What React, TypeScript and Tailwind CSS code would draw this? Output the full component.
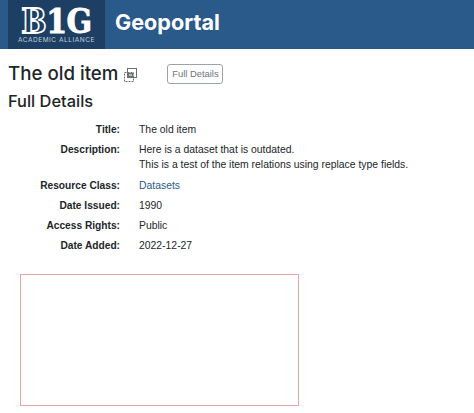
import type { ReactNode } from "react";

const Row = ({ label, children, gap = "mb-[5px]" }: { label: string; children: ReactNode; gap?: string }) => (
  <div className={`flex leading-[15px] ${gap}`}>
    <div className="w-[112px] text-right font-bold text-[10.2px] text-[#212529]">{label}</div>
    <div className="ml-[19px] text-[#212529]">{children}</div>
  </div>
);

export default function App() {
  return (
    <div className="w-[474px] h-[413px] overflow-hidden bg-white font-['Liberation_Sans',sans-serif] text-[10.4px]">
      <header className="h-[49px] bg-[#2a5a8a] flex items-stretch pl-2">
        <div className="w-[97px] bg-[#1c3f63] flex flex-col items-center">
          <div className="flex items-center h-[30px] mt-[5px] font-['DejaVu_Serif',serif] font-bold text-[30px] leading-[30px] text-white tracking-[-0.5px] scale-y-110 origin-top">
            <span className="text-[#1c3f63] [-webkit-text-stroke:1.6px_white]">B</span>
            <span className="[-webkit-text-stroke:0.8px_white]">1G</span>
          </div>
          <div className="font-['Inter',sans-serif] text-[6.5px] leading-[7px] tracking-[0.55px] text-[#c3d0dd] mt-[2px]">ACADEMIC ALLIANCE</div>
        </div>
        <div className="ml-[10px] font-['Inter',sans-serif] text-[21.6px] font-bold text-white leading-[44px]">Geoportal</div>
      </header>
      <main className="pl-2 pt-[12px]">
        <div className="flex items-center h-[26px]">
          <h1 className="font-['Inter',sans-serif] text-[18.7px] font-medium text-[#212529] leading-[26px]">The old item</h1>
          <svg className="ml-[5px] mt-[1px]" width="15" height="16" viewBox="0 0 15 16" fill="none" stroke="#6b6f73" strokeWidth="1">
            <rect x="4.5" y="1.5" width="9" height="9" />
            <rect x="1.5" y="5.5" width="9" height="9" strokeDasharray="2 1" />
            <rect x="5.5" y="6.5" width="4" height="3" fill="#b8bcc0" />
          </svg>
          <button className="ml-[29px] h-[20px] w-[56px] border border-[#9ca3a8] rounded-[3px] text-[9.4px] text-[#6c757d] bg-white">Full Details</button>
        </div>
        <h2 className="font-['Inter',sans-serif] text-[16.4px] font-medium text-[#212529] leading-[22px] mt-[3px]">Full Details</h2>
        <div className="mt-[10px]">
          <Row label="Title:">The old item</Row>
          <Row label="Description:" gap="mb-[6px]">
            <div>Here is a dataset that is outdated.</div>
            <div>This is a test of the item relations using replace type fields.</div>
          </Row>
          <Row label="Resource Class:"><span className="text-[#2a5a8a]">Datasets</span></Row>
          <Row label="Date Issued:">1990</Row>
          <Row label="Access Rights:">Public</Row>
          <Row label="Date Added:">2022-12-27</Row>
        </div>
        <div className="ml-[12px] mt-[21px] w-[279px] h-[132px] border border-[#e8a5a8]" />
      </main>
    </div>
  );
}
